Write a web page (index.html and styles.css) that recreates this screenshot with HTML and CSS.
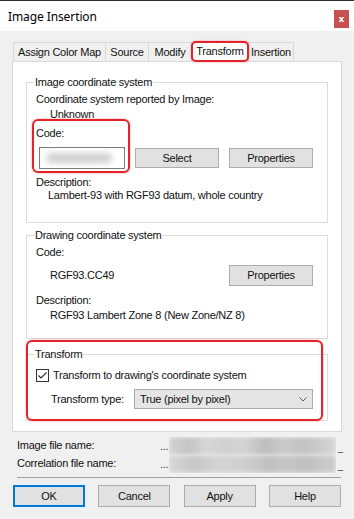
FILE: index.html
```html
<!DOCTYPE html>
<html>
<head>
<meta charset="utf-8">
<link rel="stylesheet" href="styles.css">
</head>
<body>
<div class="titlebar">
  <span class="title">Image Insertion</span>
  <span class="close">x</span>
</div>
<div class="main">
  <div class="tabs">
    <div class="tab t-assign">Assign Color Map</div>
    <div class="tab t-source">Source</div>
    <div class="tab t-modify">Modify</div>
    <div class="tab t-transform active">Transform</div>
    <div class="tab t-insertion">Insertion</div>
  </div>
  <div class="panel">
    <fieldset class="group g1">
      <legend>Image coordinate system</legend>
      <div class="line reported">Coordinate system reported by Image:</div>
      <div class="line indent-a gap2">Unknown</div>
      <div class="code-row">
        <div class="code-wrap mark">
          <div class="line">Code:</div>
          <div class="input"><span class="smudge"></span></div>
        </div>
        <button class="btn btn-select">Select</button>
        <button class="btn btn-props">Properties</button>
      </div>
      <div class="line desc">Description:</div>
      <div class="line indent-b">Lambert-93 with RGF93 datum, whole country</div>
    </fieldset>

    <fieldset class="group g2">
      <legend>Drawing coordinate system</legend>
      <div class="line code2">Code:</div>
      <div class="row2">
        <span class="line indent-a grow">RGF93.CC49</span>
        <button class="btn btn-props2">Properties</button>
      </div>
      <div class="line desc2">Description:</div>
      <div class="line indent-a gap2">RGF93 Lambert Zone 8 (New Zone/NZ 8)</div>
    </fieldset>

    <div class="g3wrap mark">
      <fieldset class="group g3">
        <legend>Transform</legend>
        <div class="check-row">
          <span class="checkbox">
            <svg width="13" height="13" viewBox="0 0 13 13"><rect x="0.5" y="0.5" width="12" height="12" fill="#fff" stroke="#333"/><path d="M2.5 6.5 L5 9 L10.5 3.5" fill="none" stroke="#333" stroke-width="1.2"/></svg>
          </span>
          <span class="line">Transform to drawing's coordinate system</span>
        </div>
        <div class="type-row">
          <span class="line type-label">Transform type:</span>
          <div class="select">
            <span class="line">True (pixel by pixel)</span>
            <svg class="chev" width="8" height="5" viewBox="0 0 8 5"><path d="M0.5 0.5 L4 4 L7.5 0.5" fill="none" stroke="#555" stroke-width="1"/></svg>
          </div>
        </div>
      </fieldset>
    </div>
  </div>

  <div class="info">
    <div class="info-row">
      <span class="line">Image file name:</span>
      <span class="line dots">...</span>
      <span class="blur"><span class="blur-in"></span></span>
      <span class="under">_</span>
    </div>
    <div class="info-row">
      <span class="line">Correlation file name:</span>
      <span class="line dots">...</span>
      <span class="blur"><span class="blur-in b2"></span></span>
      <span class="under">_</span>
    </div>
  </div>
  <div class="sep"></div>
  <div class="buttons">
    <button class="btn dlg default">OK</button>
    <button class="btn dlg">Cancel</button>
    <button class="btn dlg">Apply</button>
    <button class="btn dlg">Help</button>
  </div>
</div>
</body>
</html>
```
FILE: styles.css
```css
* { box-sizing: border-box; }
html, body { margin: 0; padding: 0; }
body {
  width: 354px;
  height: 519px;
  overflow: hidden;
  background: #f0f0f0;
  font-family: "Liberation Sans", Arial, sans-serif;
  font-size: 11px;
  letter-spacing: -0.25px;
  color: #111;
}
.titlebar {
  height: 31px;
  background: #fff;
  border-top: 1px solid #2b2b2b;
  display: flex;
  align-items: center;
  justify-content: space-between;
  padding-left: 8px;
}
.title {
  font-family: "Noto Sans", "Open Sans", sans-serif;
  font-size: 12px;
  letter-spacing: -0.1px;
  color: #000;
  margin-top: 1px;
}
.close {
  width: 15px;
  height: 18px;
  margin-right: 5px;
  margin-top: 5px;
  background: #c75050;
  color: #fff;
  font-family: "DejaVu Sans", sans-serif;
  font-size: 9px;
  font-weight: bold;
  letter-spacing: 0;
  display: flex;
  align-items: center;
  justify-content: center;
}
.main { padding: 9px 12px 0 12px; }
.tabs {
  display: flex;
  align-items: flex-end;
  height: 21px;
  padding-left: 1px;
}
.tab {
  height: 19px;
  border: 1px solid #d9d9d9;
  border-bottom: none;
  background: #f0f0f0;
  display: flex;
  align-items: center;
  justify-content: center;
  line-height: 13px;
  padding-top: 1px;
}
.tab + .tab { margin-left: -1px; }
.t-assign { width: 93px; }
.t-source { width: 44px; }
.t-modify { width: 44px; }
.t-transform { width: 58px; }
.t-insertion { width: 46px; }
.tab.active {
  position: relative;
  z-index: 2;
  height: 21px;
  margin-bottom: -1px;
  background: #fff;
  border: 2px solid #e3242b;
  border-radius: 5px;
  box-shadow: 0 0 2px rgba(227, 36, 43, 0.5);
  padding-top: 0;
  padding-bottom: 1px;
}
.panel {
  position: relative;
  z-index: 1;
  background: #fff;
  border: 1px solid #d9d9d9;
  padding: 14px 13px 10px 13px;
}
.line { line-height: 13px; white-space: nowrap; }
.group {
  margin: 0;
  border: 1px solid #dcdcdc;
  padding: 0 8px 0 9px;
  min-width: 0;
}
.group legend {
  padding: 0 1px;
  margin-left: -2px;
  line-height: 13px;
}
.reported { margin-top: 4px; }
.gap2 { margin-top: 2px; }
.indent-a { padding-left: 14px; }
.indent-b { padding-left: 12px; }
.g1 { padding-bottom: 20px; }
.code-row {
  display: flex;
  align-items: flex-end;
  margin-top: 6px;
}
.code-wrap { width: 89px; }
.mark { position: relative; }
.mark::after {
  content: "";
  position: absolute;
  border: 2px solid #e3242b;
  border-radius: 6px;
  box-shadow: 0 0 2px rgba(227, 36, 43, 0.55);
  pointer-events: none;
}
.code-wrap::after { top: -8px; left: -4px; right: -5px; bottom: -4px; }
.input {
  margin-top: 7px;
  margin-left: 3px;
  width: 86px;
  height: 22px;
  border: 1px solid #7a7a7a;
  background: #fff;
  display: flex;
  align-items: center;
  padding-left: 6px;
}
.smudge {
  display: block;
  width: 66px;
  height: 10px;
  background: #cfcfcf;
  border-radius: 5px;
  filter: blur(3px);
}
.btn {
  font-family: "Liberation Sans", Arial, sans-serif;
  font-size: 11px;
  letter-spacing: -0.25px;
  color: #111;
  background: #e1e1e1;
  border: 1px solid #adadad;
  padding: 0;
  line-height: 13px;
  height: 21px;
  width: 84px;
}
.btn-select { margin-left: 10px; margin-bottom: 1px; height: 20px; }
.btn-props { margin-left: 10px; margin-bottom: 1px; height: 20px; }
.desc { margin-top: 7px; }
.g2 { margin-top: 6px; padding-bottom: 16px; }
.code2 { margin-top: 4px; }
.row2 {
  display: flex;
  align-items: center;
  margin-top: 6px;
}
.grow { flex: 1; }
.btn-props2 { margin-right: 6px; }
.desc2 { margin-top: 8px; }
.g3wrap { margin-top: 9px; }
.g3wrap::after { top: -8px; left: 0; right: 5px; bottom: 0; }
.g3 { padding-bottom: 11px; }
.check-row {
  display: flex;
  align-items: center;
  margin-top: 8px;
  height: 13px;
}
.checkbox { width: 13px; height: 13px; margin-right: 4px; display: block; }
.checkbox svg { display: block; }
.type-row {
  display: flex;
  align-items: center;
  margin-top: 7px;
}
.type-label { padding-left: 15px; width: 98px; }
.select {
  width: 179px;
  height: 20px;
  background: #e5e5e5;
  border: 1px solid #acacac;
  display: flex;
  align-items: center;
  justify-content: space-between;
  padding: 0 5px 0 5px;
}
.chev { display: block; }
.info { margin-top: 4px; padding-left: 5px; }
.info-row {
  display: grid;
  grid-template-columns: 143px 9px 167px 6px;
  align-items: center;
  height: 18px;
}
.dots { color: #333; padding-top: 2px; }
.blur { height: 18px; overflow: hidden; display: block; }
.blur-in {
  display: block;
  height: 18px;
  background: linear-gradient(90deg, #d2d2d2 0%, #c4c4c4 12%, #d6d6d6 22%, #cfcfcf 35%, #d4d4d4 45%, #bcbcbc 58%, #cbcbcb 68%, #c2c2c2 80%, #cdcdcd 92%, #d6d6d6 100%);
  filter: blur(2px);
}
.blur-in.b2 {
  background: linear-gradient(90deg, #d6d6d6 0%, #c8c8c8 15%, #d3d3d3 30%, #d0d0d0 45%, #c0c0c0 60%, #c6c6c6 70%, #bfbfbf 82%, #cecece 100%);
}
.under { line-height: 13px; padding-top: 6px; padding-left: 2px; font-size: 9px; }
.sep {
  margin: 5px 1px 0 5px;
  border-top: 1px solid #a0a0a0;
}
.buttons {
  display: flex;
  justify-content: space-between;
  margin: 7px 1px 0 1px;
}
.btn.dlg { width: 72px; height: 22px; }
.btn.default {
  border: 1px solid #0078d7;
  box-shadow: inset 0 0 0 1px #0078d7;
}
```
